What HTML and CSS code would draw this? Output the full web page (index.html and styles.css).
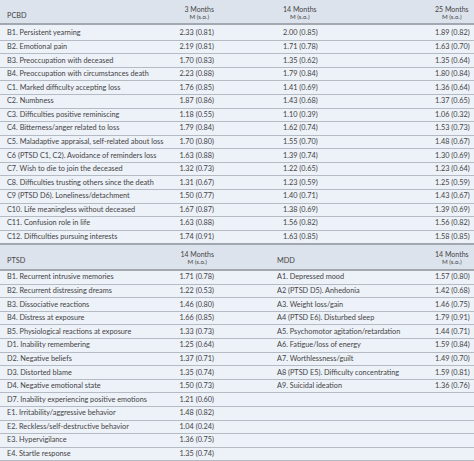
FILE: index.html
```html
<!DOCTYPE html>
<html>
<head>
<meta charset="utf-8">
<link rel="stylesheet" href="styles.css">
</head>
<body>
<div class="tbl">
  <div class="head first">
    <div class="lab">PCBD</div>
    <div class="val"><span class="hd"><span class="l1">3 Months</span><span class="l2">M (s.o.)</span></span></div>
    <div class="mid"><span class="hd"><span class="l1">14 Months</span><span class="l2">M (s.o.)</span></span></div>
    <div class="val"><span class="hd"><span class="l1">25 Months</span><span class="l2">M (s.o.)</span></span></div>
  </div>
  <div class="row top"><div class="lab">B1. Persistent yearning</div><div class="val">2.33 (0.81)</div><div class="mid">2.00 (0.85)</div><div class="val">1.89 (0.82)</div></div>
  <div class="row"><div class="lab">B2. Emotional pain</div><div class="val">2.19 (0.81)</div><div class="mid">1.71 (0.78)</div><div class="val">1.63 (0.70)</div></div>
  <div class="row"><div class="lab">B3. Preoccupation with deceased</div><div class="val">1.70 (0.83)</div><div class="mid">1.35 (0.62)</div><div class="val">1.35 (0.64)</div></div>
  <div class="row"><div class="lab">B4. Preoccupation with circumstances death</div><div class="val">2.23 (0.88)</div><div class="mid">1.79 (0.84)</div><div class="val">1.80 (0.84)</div></div>
  <div class="row"><div class="lab">C1. Marked difficulty accepting loss</div><div class="val">1.76 (0.85)</div><div class="mid">1.41 (0.69)</div><div class="val">1.36 (0.64)</div></div>
  <div class="row"><div class="lab">C2. Numbness</div><div class="val">1.87 (0.86)</div><div class="mid">1.43 (0.68)</div><div class="val">1.37 (0.65)</div></div>
  <div class="row"><div class="lab">C3. Difficulties positive reminiscing</div><div class="val">1.18 (0.55)</div><div class="mid">1.10 (0.39)</div><div class="val">1.06 (0.32)</div></div>
  <div class="row"><div class="lab">C4. Bitterness/anger related to loss</div><div class="val">1.79 (0.84)</div><div class="mid">1.62 (0.74)</div><div class="val">1.53 (0.73)</div></div>
  <div class="row"><div class="lab">C5. Maladaptive appraisal, self-related about loss</div><div class="val">1.70 (0.80)</div><div class="mid">1.55 (0.70)</div><div class="val">1.48 (0.67)</div></div>
  <div class="row"><div class="lab">C6 (PTSD C1, C2). Avoidance of reminders loss</div><div class="val">1.63 (0.88)</div><div class="mid">1.39 (0.74)</div><div class="val">1.30 (0.69)</div></div>
  <div class="row"><div class="lab">C7. Wish to die to join the deceased</div><div class="val">1.32 (0.73)</div><div class="mid">1.22 (0.65)</div><div class="val">1.23 (0.64)</div></div>
  <div class="row"><div class="lab">C8. Difficulties trusting others since the death</div><div class="val">1.31 (0.67)</div><div class="mid">1.23 (0.59)</div><div class="val">1.25 (0.59)</div></div>
  <div class="row"><div class="lab">C9 (PTSD D6). Loneliness/detachment</div><div class="val">1.50 (0.77)</div><div class="mid">1.40 (0.71)</div><div class="val">1.43 (0.67)</div></div>
  <div class="row"><div class="lab">C10. Life meaningless without deceased</div><div class="val">1.67 (0.87)</div><div class="mid">1.38 (0.69)</div><div class="val">1.39 (0.69)</div></div>
  <div class="row"><div class="lab">C11. Confusion role in life</div><div class="val">1.63 (0.88)</div><div class="mid">1.56 (0.82)</div><div class="val">1.56 (0.82)</div></div>
  <div class="row last"><div class="lab">C12. Difficulties pursuing interests</div><div class="val">1.74 (0.91)</div><div class="mid">1.63 (0.85)</div><div class="val">1.58 (0.85)</div></div>

  <div class="head second">
    <div class="lab">PTSD</div>
    <div class="val"><span class="hd"><span class="l1">14 Months</span><span class="l2">M (s.o.)</span></span></div>
    <div class="mid2">MDD</div>
    <div class="val"><span class="hd"><span class="l1">14 Months</span><span class="l2">M (s.o.)</span></span></div>
  </div>
  <div class="row"><div class="lab">B1. Recurrent intrusive memories</div><div class="val">1.71 (0.78)</div><div class="mid2">A1. Depressed mood</div><div class="val">1.57 (0.80)</div></div>
  <div class="row"><div class="lab">B2. Recurrent distressing dreams</div><div class="val">1.22 (0.53)</div><div class="mid2">A2 (PTSD D5). Anhedonia</div><div class="val">1.42 (0.68)</div></div>
  <div class="row"><div class="lab">B3. Dissociative reactions</div><div class="val">1.46 (0.80)</div><div class="mid2">A3. Weight loss/gain</div><div class="val">1.46 (0.75)</div></div>
  <div class="row"><div class="lab">B4. Distress at exposure</div><div class="val">1.66 (0.85)</div><div class="mid2">A4 (PTSD E6). Disturbed sleep</div><div class="val">1.79 (0.91)</div></div>
  <div class="row"><div class="lab">B5. Physiological reactions at exposure</div><div class="val">1.33 (0.73)</div><div class="mid2">A5. Psychomotor agitation/retardation</div><div class="val">1.44 (0.71)</div></div>
  <div class="row"><div class="lab">D1. Inability remembering</div><div class="val">1.25 (0.64)</div><div class="mid2">A6. Fatigue/loss of energy</div><div class="val">1.59 (0.84)</div></div>
  <div class="row"><div class="lab">D2. Negative beliefs</div><div class="val">1.37 (0.71)</div><div class="mid2">A7. Worthlessness/guilt</div><div class="val">1.49 (0.70)</div></div>
  <div class="row"><div class="lab">D3. Distorted blame</div><div class="val">1.35 (0.74)</div><div class="mid2">A8 (PTSD E5). Difficulty concentrating</div><div class="val">1.59 (0.81)</div></div>
  <div class="row"><div class="lab">D4. Negative emotional state</div><div class="val">1.50 (0.73)</div><div class="mid2">A9. Suicidal ideation</div><div class="val">1.36 (0.76)</div></div>
  <div class="row"><div class="lab">D7. Inability experiencing positive emotions</div><div class="val">1.21 (0.60)</div><div class="mid2"></div><div class="val"></div></div>
  <div class="row"><div class="lab">E1. Irritability/aggressive behavior</div><div class="val">1.48 (0.82)</div><div class="mid2"></div><div class="val"></div></div>
  <div class="row"><div class="lab">E2. Reckless/self-destructive behavior</div><div class="val">1.04 (0.24)</div><div class="mid2"></div><div class="val"></div></div>
  <div class="row"><div class="lab">E3. Hypervigilance</div><div class="val">1.36 (0.75)</div><div class="mid2"></div><div class="val"></div></div>
  <div class="row"><div class="lab">E4. Startle response</div><div class="val">1.35 (0.74)</div><div class="mid2"></div><div class="val"></div></div>
</div>
</body>
</html>
```
FILE: styles.css
```css
html, body {
  margin: 0;
  padding: 0;
  background: #edf1f8;
}
.tbl {
  width: 474px;
  font-family: Lato, "Open Sans", sans-serif;
  font-size: 7.3px;
  color: #444;
  white-space: nowrap;
}
.head, .row {
  display: grid;
  grid-template-columns: 163px 44px 221px 32px;
  padding: 0 7px;
  box-sizing: border-box;
}
.head {
  background: #dde3ed;
  border-bottom: 2px solid #a3a8b0;
  height: 25.3px;
  padding-top: 4.5px;
  padding-bottom: 4.5px;
  align-items: end;
}
.head.second {
  border-top: 2px solid #a3a8b0;
  height: 27.8px;
  padding-top: 5px;
}
.hd {
  display: inline-flex;
  flex-direction: column;
  align-items: center;
}
.l1 {
  font-size: 7px;
  line-height: 7px;
}
.l2 {
  font-size: 6.2px;
  line-height: 7px;
}
.row {
  background: #edf1f8;
  border-bottom: 1px solid #b6bac2;
  height: 13.58px;
  align-items: center;
  line-height: 12px;
}
.row.top {
  height: 15.4px;
  padding-top: 1.8px;
}
.row.last {
  border-bottom: none;
  height: 12.6px;
}
.val {
  text-align: right;
}
.mid {
  padding-left: 69px;
}
.mid2 {
  padding-left: 63px;
}
.head .lab, .head .mid2 {
  line-height: 8px;
}
```
